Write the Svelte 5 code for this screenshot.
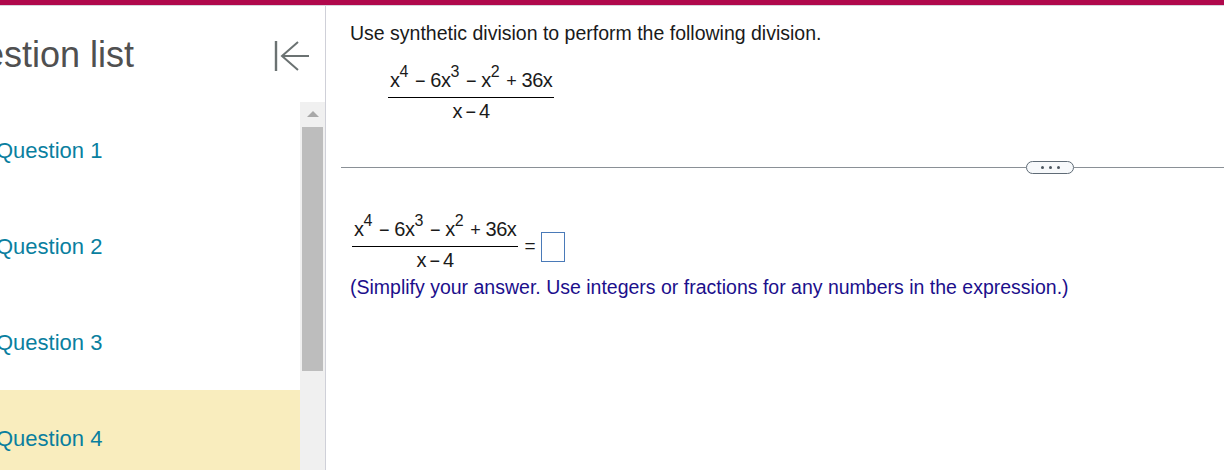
<script>
  const questions = ['Question 1', 'Question 2', 'Question 3', 'Question 4'];
  const current = 'Question 4';
</script>

{#snippet fraction()}
  <span class="fraction">
    <span class="numerator">x<sup>4</sup><i class="op">−</i>6x<sup>3</sup><i class="op">−</i>x<sup>2</sup><i class="op">+</i>36x</span>
    <span class="denominator">x<i class="op tight">−</i>4</span>
  </span>
{/snippet}

<div class="page">
  <div class="topbar"></div>
  <div class="columns">
    <aside class="sidebar">
      <header class="side-head">
        <h2>Question list</h2>
        <svg class="collapse" width="38" height="34" viewBox="0 0 38 34" fill="none" stroke="#6b7272" stroke-width="2">
          <line x1="3" y1="2" x2="3" y2="32" stroke-width="2.4" />
          <line x1="9" y1="17" x2="36" y2="17" />
          <polyline points="25,3 9,17 25,31" />
        </svg>
      </header>
      <div class="list-wrap">
        <ul class="list">
          {#each questions as q}
            <li class:active={q === current}>{q}</li>
          {/each}
        </ul>
        <div class="scrollbar">
          <span class="arrow"></span>
          <span class="thumb"></span>
        </div>
      </div>
    </aside>

    <main class="content">
      <p class="prompt">Use synthetic division to perform the following division.</p>
      <div class="given">{@render fraction()}</div>

      <div class="divider">
        <span class="rule"></span>
        <span class="pill"><b></b><b></b><b></b></span>
        <span class="rule"></span>
      </div>

      <div class="answer">
        {@render fraction()}
        <span class="equals">=</span>
        <span class="box"></span>
      </div>
      <p class="hint">(Simplify your answer. Use integers or fractions for any numbers in the expression.)</p>
    </main>
  </div>
</div>

<style>
  :global(body) {
    margin: 0;
    background: #fff;
  }

  .page {
    display: flex;
    flex-direction: column;
    width: 1224px;
    height: 470px;
    overflow: hidden;
    font-family: "Liberation Sans", Arial, sans-serif;
    color: #1a1a1a;
  }

  .topbar {
    flex: none;
    height: 5px;
    background: #b0084c;
    border-bottom: 1px solid #d8d4dc;
  }

  .columns {
    flex: 1;
    display: flex;
    min-height: 0;
  }

  .sidebar {
    flex: none;
    display: flex;
    flex-direction: column;
    width: 326px;
    box-sizing: border-box;
    border-right: 1px solid #cfd0d8;
    overflow: hidden;
  }

  .side-head {
    flex: none;
    display: flex;
    align-items: center;
    justify-content: space-between;
    height: 96px;
    padding: 0 14px 0 0;
    box-sizing: border-box;
  }

  .side-head h2 {
    margin: 0 0 0 -64px;
    font-size: 36px;
    font-weight: 400;
    color: #505050;
    position: relative;
    top: 1px;
  }

  .collapse {
    margin-top: 3px;
  }

  .list-wrap {
    flex: 1;
    display: flex;
    min-height: 0;
  }

  .list {
    flex: none;
    width: 300px;
    margin: 0;
    padding: 0;
    list-style: none;
  }

  .list li {
    height: 96px;
    text-indent: -4px;
    line-height: 97px;
    font-size: 22px;
    color: #0a7f9f;
  }

  .list li.active {
    background: #f9edbe;
  }

  .scrollbar {
    flex: 1;
    display: flex;
    flex-direction: column;
    align-items: center;
    background: #f0f0f0;
  }

  .arrow {
    margin-top: 9px;
    width: 0;
    height: 0;
    border-left: 6px solid transparent;
    border-right: 6px solid transparent;
    border-bottom: 6px solid #a8a8a8;
  }

  .thumb {
    margin-top: 10px;
    width: 21px;
    height: 244px;
    background: #bdbdbd;
  }

  .content {
    flex: 1;
    min-width: 0;
    padding: 16px 0 0 25px;
  }

  .prompt {
    margin: 0 0 0 -1px;
    font-size: 19.5px;
    line-height: 23px;
  }

  .given {
    margin: 23px 0 0 37px;
    height: 82px;
  }

  .fraction {
    display: inline-flex;
    flex-direction: column;
    align-items: center;
    font-size: 20px;
  }

  .numerator {
    display: block;
    padding: 0 2px 3px;
    border-bottom: 1px solid #000;
    line-height: 25px;
    white-space: nowrap;
    letter-spacing: -0.4px;
  }

  .denominator {
    display: block;
    line-height: 26px;
  }

  .numerator sup {
    font-size: 16px;
    line-height: 0;
    vertical-align: 10px;
  }

  .op {
    font-style: normal;
    margin: 0 5px 0 7px;
    font-size: 18px;
  }

  .op.tight {
    margin: 0 3px;
  }

  .divider {
    display: flex;
    align-items: center;
    margin: 10px 0 0 -10px;
    height: 14px;
  }

  .rule {
    flex: 1;
    height: 1px;
    background: #8a9096;
  }

  .rule:first-child {
    flex: none;
    width: 685px;
  }

  .pill {
    flex: none;
    display: flex;
    align-items: center;
    justify-content: center;
    gap: 5px;
    width: 48px;
    height: 13px;
    box-sizing: border-box;
    border: 1px solid #5f6b76;
    border-radius: 7px;
    background: #f7f9fb;
  }

  .pill b {
    width: 3px;
    height: 3px;
    background: #4c5660;
    border-radius: 50%;
  }

  .answer {
    display: flex;
    align-items: center;
    margin: 43px 0 0 1px;
  }

  .equals {
    margin: 0 5px 0 6px;
    font-size: 19px;
  }

  .box {
    width: 24px;
    height: 30px;
    margin-top: 2px;
    box-sizing: border-box;
    border: 1px solid #4a7ab8;
  }

  .hint {
    margin: 2px 0 0 -1px;
    font-size: 19.5px;
    line-height: 23px;
    color: #1c0f8c;
  }
</style>
